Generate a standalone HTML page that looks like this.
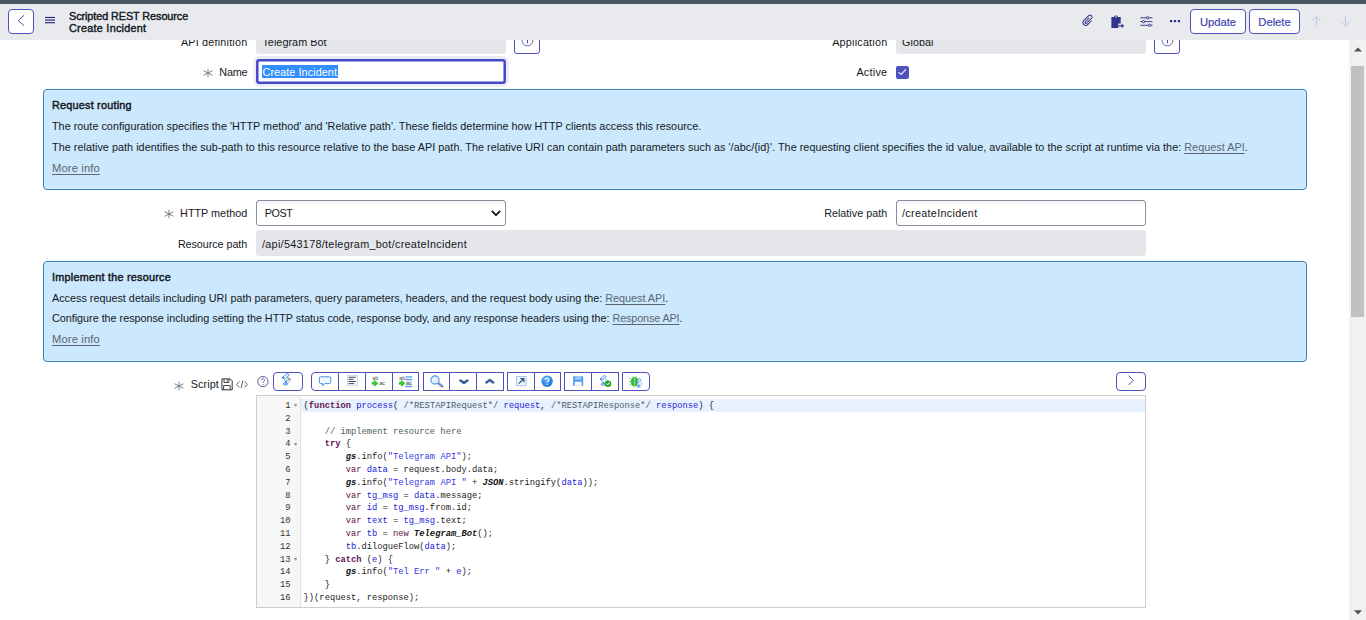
<!DOCTYPE html>
<html lang="en">
<head>
<meta charset="utf-8">
<title>Create Incident | Scripted REST Resource</title>
<style>
*{box-sizing:border-box;margin:0;padding:0}
html,body{width:1366px;height:620px;overflow:hidden;background:#fff}
body{position:relative;font-family:"Liberation Sans",Arial,sans-serif;font-size:10.8px;color:#16181d}
.abs{position:absolute}
svg{position:absolute;overflow:visible}
#strip{left:0;top:0;width:1366px;height:4px;background:#46555f}
#hdr{left:0;top:4px;width:1366px;height:36px;background:#e8eaed}
#back{left:8px;top:9px;width:26px;height:25px;border:1px solid #4f52bd;border-radius:4px;background:#fff}
.title{left:69px;font-size:10.8px;line-height:12px;height:12px;white-space:nowrap;color:#0f1722;-webkit-text-stroke:0.4px #0f1722}
.btn{top:9px;height:25px;border:1px solid #4f52bd;border-radius:4px;background:#fff;color:#4146b6;font-size:11.2px;line-height:25px;text-align:center;white-space:nowrap;-webkit-text-stroke:0.2px #4146b6}
.lbl{height:26px;line-height:26px;text-align:right;white-space:nowrap;font-size:10.8px;color:#16181d}
.ro{background:#e4e6e9;border-radius:3px;height:26px;line-height:26px;padding-left:6px;white-space:nowrap;color:#16181d}
.inp{background:linear-gradient(#eff0f2,#fff 4px);border:1px solid #858e9a;border-radius:3px;height:26px;line-height:24px;padding-left:5px;white-space:nowrap}
.ibtn{width:26px;height:26px;border:1px solid #4f52bd;border-radius:3px;background:#fff}
.info{left:43px;width:1264px;height:101px;background:#cbe8fc;border:1px solid #2f80bc;border-radius:4px;box-shadow:inset 0 0 0 1px rgba(255,255,255,0.3)}
.info div{position:absolute;left:8px;white-space:nowrap;line-height:14px;height:14px;color:#16181d}
.info .h{-webkit-text-stroke:0.45px #16181d}
.info u{color:#5c6670;text-decoration-thickness:1px;text-underline-offset:1.5px}
.info .m{font-size:11.2px;letter-spacing:0.14px}
#sb{left:1349px;top:40px;width:17px;height:580px;background:#f1f1f1}
#sbt{left:1351px;top:66px;width:13px;height:251px;background:#c1c1c1}
.tb{top:372px;height:19px;border:1px solid #4f52bd;background:#fff}
#ed{left:256px;top:395px;width:890px;height:213px;border:1px solid #cdcdcd;background:#fff;overflow:hidden}
#gut{left:0;top:0;width:44px;height:211px;background:#f7f7f7;border-right:1px solid #e2e2e2}
#act{left:44px;top:3px;width:844px;height:13px;background:#e8f1fe}
#code,#nums{position:absolute;top:4px;font-family:"Liberation Mono","DejaVu Sans Mono",monospace;font-size:8.78px;line-height:12.8px;white-space:pre;color:#222}
#code{left:46.6px}
#nums{left:0;width:33.6px;text-align:right;color:#333}
.k{color:#641650;font-weight:bold}
.v{color:#5e1448}
.d{color:#2222d8}
.c{color:#4d5d63}
.s{color:#3a3ae6}
.g{font-weight:bold;font-style:italic;color:#111}
.fold{position:absolute;left:37px;font-size:6px;color:#8a8a96;font-family:"DejaVu Sans",sans-serif;line-height:12.8px}
</style>
</head>
<body>
<div class="abs lbl" style="left:100px;top:29px;width:147.4px;letter-spacing:0.205px">API definition</div>
<div class="abs ro" style="left:256px;top:28px;width:250px;padding-left:6.4px;line-height:28px;letter-spacing:0.05px">Telegram Bot</div>
<div class="abs ibtn" style="left:514px;top:28px"></div>
<svg style="left:521px;top:33.5px" width="13" height="13" viewBox="0 0 13 13"><circle cx="6.5" cy="6.5" r="5.4" fill="none" stroke="#4f52bd" stroke-width="0.9"/><line x1="6.5" y1="5.6" x2="6.5" y2="9.4" stroke="#4f52bd" stroke-width="1"/><circle cx="6.5" cy="3.8" r="0.7" fill="#4f52bd"/></svg>
<div class="abs lbl" style="left:740px;top:29px;width:147.4px;letter-spacing:0.216px">Application</div>
<div class="abs ro" style="left:896px;top:28px;width:250px;letter-spacing:0.05px;line-height:28px">Global</div>
<div class="abs ibtn" style="left:1154px;top:28px"></div>
<svg style="left:1160.8px;top:33.5px" width="13" height="13" viewBox="0 0 13 13"><circle cx="6.5" cy="6.5" r="5.4" fill="none" stroke="#4f52bd" stroke-width="0.9"/><line x1="6.5" y1="5.6" x2="6.5" y2="9.4" stroke="#4f52bd" stroke-width="1"/><circle cx="6.5" cy="3.8" r="0.7" fill="#4f52bd"/></svg>
<div class="abs" id="strip"></div>
<div class="abs" id="hdr"></div>
<div class="abs" id="back"></div>
<svg style="left:8px;top:9px" width="26" height="25" viewBox="0 0 26 25"><polyline points="16,6.3 10.3,11.5 16,16.7" fill="none" stroke="#4f52bd" stroke-width="1"/></svg>
<svg style="left:45px;top:16px" width="10" height="8" viewBox="0 0 10 8"><g stroke="#25277a" stroke-width="1.15"><line x1="0" y1="1.5" x2="10" y2="1.5"/><line x1="0" y1="4.1" x2="10" y2="4.1"/><line x1="0" y1="6.7" x2="10" y2="6.7"/></g></svg>
<div class="abs title" style="top:10px;letter-spacing:-0.06px">Scripted REST Resource</div>
<div class="abs title" style="top:22px;letter-spacing:0.278px">Create Incident</div>
<svg style="left:1082px;top:14px" width="12" height="12" viewBox="-6 -6 12 12"><g transform="translate(0,0.3) rotate(45)"><path d="M2.8 -2.2 V3.2 a2.8 2.8 0 0 1 -5.6 0 V-3.9 a1.9 1.9 0 0 1 3.8 0 V2.9 a0.95 0.95 0 0 1 -1.9 0 V-2.2" fill="none" stroke="#2e2f82" stroke-width="0.95" stroke-linecap="round"/></g></svg>
<svg style="left:1111px;top:15px" width="14" height="14" viewBox="0 0 14 14"><path d="M0.4 2 h2.6 a2.1 2.1 0 0 1 4 0 h2.7 v6.4 h-2.3 v4.6 h-7 z" fill="#33348c"/><circle cx="5" cy="1.9" r="0.75" fill="#e8eaed"/><path d="M7.9 10.2 h2.8 v-1.8 l2.4 2.4 l-2.4 2.4 v-1.8 h-2.8 z" fill="#33348c"/></svg>
<svg style="left:1139.5px;top:15.5px" width="13" height="11" viewBox="0 0 13 11"><g stroke="#2e2f82" stroke-width="0.9" fill="#e8eaed"><line x1="0.3" y1="1.8" x2="12.5" y2="1.8"/><line x1="0.3" y1="5.6" x2="12.5" y2="5.6"/><line x1="0.3" y1="9.3" x2="12.5" y2="9.3"/><circle cx="7.6" cy="1.8" r="1.2"/><circle cx="3.6" cy="5.6" r="1.2"/><circle cx="9.6" cy="9.3" r="1.2"/></g></svg>
<svg style="left:1169.5px;top:19.8px" width="10" height="2" viewBox="0 0 10 2"><rect x="0" y="0" width="2.2" height="2.2" fill="#2e2f82"/><rect x="3.9" y="0" width="2.2" height="2.2" fill="#2e2f82"/><rect x="7.8" y="0" width="2.2" height="2.2" fill="#2e2f82"/></svg>
<div class="abs btn" style="left:1190px;width:56px">Update</div>
<div class="abs btn" style="left:1249px;width:51px">Delete</div>
<svg style="left:1311px;top:15.5px" width="11" height="11" viewBox="0 0 11 11"><path d="M5.5 10.5 V1 M1 5.3 L5.5 0.8 L10 5.3" fill="none" stroke="#c3c5e6" stroke-width="1"/></svg>
<svg style="left:1339.5px;top:15.5px" width="11" height="11" viewBox="0 0 11 11"><path d="M5.5 0.5 V10 M1 5.7 L5.5 10.2 L10 5.7" fill="none" stroke="#c3c5e6" stroke-width="1"/></svg>
<svg style="left:203.3px;top:67.5px" width="10" height="10" viewBox="-5 -5 10 10"><g stroke="#6b7480" stroke-width="0.9" stroke-linecap="butt"><line x1="0" y1="-4.3" x2="0" y2="4.3"/><line x1="-4.5" y1="-2.3" x2="4.5" y2="2.3"/><line x1="-4.5" y1="2.3" x2="4.5" y2="-2.3"/></g></svg>
<div class="abs lbl" style="left:100px;top:59px;width:147.4px;letter-spacing:-0.178px">Name</div>
<svg style="left:250px;top:52px" width="262" height="38" viewBox="250 52 262 38"><rect x="253.3" y="56.1" width="255.4" height="30.6" rx="5.5" fill="#ebebfa"/><rect x="257.3" y="60.15" width="247.4" height="22.6" rx="2" fill="#fff" stroke="#4348ca" stroke-width="2.5"/></svg>
<div class="abs" style="left:262px;top:65px;width:76px;height:13px;background:#338fff"></div>
<div class="abs" style="left:262.5px;top:59px;height:26px;line-height:26px;color:#fff;white-space:nowrap;letter-spacing:0.084px">Create Incident</div>
<div class="abs lbl" style="left:740px;top:59px;width:147.4px;letter-spacing:0.266px">Active</div>
<div class="abs" style="left:896px;top:66px;width:13px;height:13px;background:#4f52bd;border-radius:2px"></div>
<svg style="left:896px;top:66px" width="13" height="13" viewBox="0 0 13 13"><polyline points="2.4,6.4 5.2,8.3 9.8,3.4" fill="none" stroke="#fff" stroke-width="1.05"/></svg>
<div class="abs info" style="top:89px">
 <div class="h" style="top:8px;letter-spacing:0.238px">Request routing</div>
 <div style="top:29px;letter-spacing:0.023px">The route configuration specifies the 'HTTP method' and 'Relative path'. These fields determine how HTTP clients access this resource.</div>
 <div style="top:50px;letter-spacing:0.04px">The relative path identifies the sub-path to this resource relative to the base API path. The relative URI can contain path parameters such as '/abc/{id}'. The requesting client specifies the id value, available to the script at runtime via the: <u>Request API</u>.</div>
 <div class="m" style="top:71px"><u>More info</u></div>
</div>
<svg style="left:163.7px;top:208.9px" width="10" height="10" viewBox="-5 -5 10 10"><g stroke="#6b7480" stroke-width="0.9" stroke-linecap="butt"><line x1="0" y1="-4.3" x2="0" y2="4.3"/><line x1="-4.5" y1="-2.3" x2="4.5" y2="2.3"/><line x1="-4.5" y1="2.3" x2="4.5" y2="-2.3"/></g></svg>
<div class="abs lbl" style="left:100px;top:200px;width:147.2px;letter-spacing:0.008px">HTTP method</div>
<div class="abs inp" style="left:256px;top:200px;width:250px;padding-left:7.8px;letter-spacing:-0.45px">POST</div>
<svg style="left:491px;top:210px" width="10" height="7" viewBox="0 0 10 7"><polyline points="0.8,0.9 5,5.1 9.2,0.9" fill="none" stroke="#1b1c2b" stroke-width="1.9"/></svg>
<div class="abs lbl" style="left:740px;top:200px;width:147.2px;letter-spacing:0px">Relative path</div>
<div class="abs inp" style="left:896px;top:200px;width:250px;letter-spacing:0.311px">/createIncident</div>
<div class="abs lbl" style="left:100px;top:231px;width:147.2px;letter-spacing:-0.072px">Resource path</div>
<div class="abs ro" style="left:256px;top:230px;width:890px;letter-spacing:0.3px;line-height:28px">/api/543178/telegram_bot/createIncident</div>
<div class="abs info" style="top:261px">
 <div class="h" style="top:8px;letter-spacing:0.254px">Implement the resource</div>
 <div style="top:29px;letter-spacing:0.004px">Access request details including URI path parameters, query parameters, headers, and the request body using the: <u>Request API</u>.</div>
 <div style="top:49px;letter-spacing:-0.018px">Configure the response including setting the HTTP status code, response body, and any response headers using the: <u style="letter-spacing:-0.128px">Response API</u>.</div>
 <div class="m" style="top:70px"><u>More info</u></div>
</div>
<svg style="left:174.4px;top:380.6px" width="10" height="10" viewBox="-5 -5 10 10"><g stroke="#6b7480" stroke-width="0.9" stroke-linecap="butt"><line x1="0" y1="-4.3" x2="0" y2="4.3"/><line x1="-4.5" y1="-2.3" x2="4.5" y2="2.3"/><line x1="-4.5" y1="2.3" x2="4.5" y2="-2.3"/></g></svg>
<div class="abs lbl" style="left:150px;top:371px;width:68.8px;letter-spacing:0.065px">Script</div>
<svg style="left:221px;top:377.5px" width="12" height="13" viewBox="0 0 12 13"><path d="M0.9 0.9 h8.3 l2 2 v8.9 h-10.3 z" fill="none" stroke="#2b3536" stroke-width="1"/><path d="M3 0.9 v3.6 h5 v-3.6 M6.3 1.6 v2 M2.6 11.8 v-4.3 h6.6 v4.3" fill="none" stroke="#2b3536" stroke-width="0.9"/></svg>
<svg style="left:235.5px;top:380px" width="12" height="9" viewBox="0 0 12 9"><path d="M3.4 1.4 L0.7 4.4 L3.4 7.4 M8.6 1.4 L11.3 4.4 L8.6 7.4 M6.9 0.6 L5.1 8.2" fill="none" stroke="#4a5558" stroke-width="0.9"/></svg>
<svg style="left:256.5px;top:376px" width="12" height="12" viewBox="0 0 12 12"><circle cx="5.9" cy="5.6" r="5.1" fill="none" stroke="#34367f" stroke-width="0.8"/><path d="M4.3 4.2 a1.6 1.5 0 1 1 2.4 1.3 q-0.8 0.5 -0.8 1.5" fill="none" stroke="#34367f" stroke-width="0.8"/><circle cx="5.9" cy="8.5" r="0.5" fill="#34367f"/></svg>
<div class="abs tb" style="left:273px;width:30px;border-radius:4px 4px 4px 4px"></div>
<div class="abs tb" style="left:311px;width:28px;border-radius:4px 0px 0px 4px"></div>
<div class="abs tb" style="left:338px;width:28px;border-radius:0px 0px 0px 0px"></div>
<div class="abs tb" style="left:365px;width:28px;border-radius:0px 0px 0px 0px"></div>
<div class="abs tb" style="left:392px;width:27px;border-radius:0px 0px 0px 0px"></div>
<div class="abs tb" style="left:423px;width:27px;border-radius:0px 0px 0px 0px"></div>
<div class="abs tb" style="left:449px;width:28px;border-radius:0px 0px 0px 0px"></div>
<div class="abs tb" style="left:476px;width:28px;border-radius:0px 0px 0px 0px"></div>
<div class="abs tb" style="left:507px;width:28px;border-radius:0px 0px 0px 0px"></div>
<div class="abs tb" style="left:534px;width:27px;border-radius:0px 0px 0px 0px"></div>
<div class="abs tb" style="left:564px;width:28px;border-radius:0px 0px 0px 0px"></div>
<div class="abs tb" style="left:591px;width:28px;border-radius:0px 0px 0px 0px"></div>
<div class="abs tb" style="left:622px;width:28px;border-radius:0px 4px 4px 0px"></div>
<div class="abs tb" style="left:1116px;width:30px;border-radius:4px"></div>
<svg style="left:1116px;top:372px" width="30" height="19" viewBox="0 0 30 19"><polyline points="12.6,3.6 17.2,8.3 12.6,13" fill="none" stroke="#4f52bd" stroke-width="1"/></svg>

<svg style="left:281.8px;top:372.6px" width="10" height="13" viewBox="0 0 10 13"><path d="M4.8 0.4 L7.4 1.8 L2.6 6.3 L0.3 4.6 Z" fill="#dbe8ff" stroke="#3f86f5" stroke-width="0.8"/><path d="M5.2 3.6 L9 6.3 L5.6 10.2 L2.2 7.2 Z" fill="#eef4ff" stroke="#6ea5f8" stroke-width="0.7"/><ellipse cx="3.4" cy="10.9" rx="2.3" ry="1.2" fill="#9cc2fb" stroke="#3f86f5" stroke-width="0.7"/><circle cx="0.9" cy="4.6" r="0.9" fill="#1546c8"/><circle cx="3.8" cy="8.9" r="0.8" fill="#1546c8"/><path d="M4.6 4.9 l2 -0.3 M3.9 7.6 l1.8 -0.5" stroke="#35c435" stroke-width="0.9"/><ellipse cx="6.9" cy="6.2" rx="1.1" ry="0.6" fill="#e23a1c"/></svg>
<svg style="left:318.5px;top:375.5px" width="13" height="11" viewBox="0 0 13 11"><path d="M1.6 0.8 h9 a1.2 1.2 0 0 1 1.2 1.2 v4.4 a1.2 1.2 0 0 1 -1.2 1.2 h-4.8 l-2.3 2.4 v-2.4 h-1.9 a1.2 1.2 0 0 1 -1.2 -1.2 v-4.4 a1.2 1.2 0 0 1 1.2 -1.2 z" fill="#f1f7ff" stroke="#4a93ea" stroke-width="1"/></svg>
<svg style="left:347px;top:375px" width="11" height="11" viewBox="0 0 11 11"><rect x="0.4" y="0.4" width="10.2" height="10.2" fill="#f1f6ff" stroke="#bcd4f6" stroke-width="0.8"/><g stroke="#4c4c4c" stroke-width="1"><line x1="1.6" y1="2.3" x2="8.8" y2="2.3"/><line x1="1.6" y1="4.4" x2="6.4" y2="4.4"/><line x1="1.6" y1="6.5" x2="8.8" y2="6.5"/><line x1="1.6" y1="8.6" x2="7" y2="8.6"/></g></svg>
<svg style="left:371.6px;top:374.8px" width="14" height="12" viewBox="0 0 14 12"><text x="0.2" y="4.6" font-family="Liberation Sans,sans-serif" font-size="5.6" fill="#555">ab</text><text x="7.2" y="10.2" font-family="Liberation Sans,sans-serif" font-size="5.6" fill="#444">ac</text><path d="M0.3 7.3 h2.2 v-1.9 l3.4 2.9 l-3.4 2.9 v-1.9 h-2.2 z" fill="#35d435" stroke="#12a012" stroke-width="0.6"/></svg>
<svg style="left:398.7px;top:374.8px" width="14" height="13" viewBox="0 0 14 13"><text x="0.2" y="4.6" font-family="Liberation Sans,sans-serif" font-size="5.6" fill="#555">ab</text><rect x="6.4" y="1" width="6.8" height="10.8" fill="#e3eefc"/><g stroke="#5b96e6" stroke-width="1.1"><line x1="6.4" y1="1.9" x2="13.2" y2="1.9"/><line x1="6.4" y1="4.6" x2="13.2" y2="4.6"/></g><line x1="6.4" y1="11.7" x2="13.2" y2="11.7" stroke="#3f86f5" stroke-width="1"/><text x="7" y="10.2" font-family="Liberation Sans,sans-serif" font-size="5.6" fill="#444">ac</text><path d="M0.3 7.3 h2.2 v-1.9 l3.4 2.9 l-3.4 2.9 v-1.9 h-2.2 z" fill="#35d435" stroke="#12a012" stroke-width="0.6"/></svg>
<svg style="left:430px;top:374.5px" width="14" height="13" viewBox="0 0 14 13"><line x1="8.2" y1="8.2" x2="12.2" y2="11.4" stroke="#4f6fa8" stroke-width="2.3" stroke-linecap="round"/><line x1="8.6" y1="8.5" x2="12" y2="11.2" stroke="#9fc4f4" stroke-width="0.9" stroke-linecap="round"/><circle cx="5" cy="5" r="4.1" fill="#e3f0ff" stroke="#4a93ea" stroke-width="1.1"/></svg>
<svg style="left:458.5px;top:378.5px" width="10" height="6" viewBox="0 0 10 6"><polyline points="1.4,1.5 4.9,3.9 8.4,1.5" fill="none" stroke="#3a5d9f" stroke-width="2.5" stroke-linecap="round" stroke-linejoin="round"/></svg>
<svg style="left:485px;top:377.8px" width="10" height="6" viewBox="0 0 10 6"><polyline points="1.4,4.4 4.8,2 8.2,4.4" fill="none" stroke="#3a5d9f" stroke-width="2.5" stroke-linecap="round" stroke-linejoin="round"/></svg>
<svg style="left:515.5px;top:375.8px" width="11" height="11" viewBox="0 0 11 11"><rect x="0.5" y="0.5" width="9.6" height="9.2" fill="#eef4ff" stroke="#a9c4f2" stroke-width="1"/><path d="M2.8 7.6 L7.4 3 M4.3 2.7 h3.5 v3.5" fill="none" stroke="#3b4f78" stroke-width="1.3"/></svg>
<svg style="left:541px;top:374.5px" width="12" height="12" viewBox="0 0 12 12"><defs><radialGradient id="hg" cx="0.4" cy="0.3" r="0.8"><stop offset="0" stop-color="#5fb2ff"/><stop offset="1" stop-color="#0f68e0"/></radialGradient></defs><circle cx="6.1" cy="6.2" r="5.7" fill="url(#hg)"/><path d="M4.3 4.7 a1.8 1.6 0 1 1 2.7 1.4 q-0.9 0.5 -0.9 1.4" fill="none" stroke="#fff" stroke-width="1.2"/><circle cx="6.1" cy="9.3" r="0.75" fill="#fff"/></svg>
<svg style="left:573px;top:376px" width="11" height="10" viewBox="0 0 11 10"><rect x="0.2" y="0.2" width="10" height="9.7" rx="0.8" fill="#4a97f5"/><rect x="2" y="0.2" width="6.4" height="3.6" fill="#9cc8ff"/><rect x="1.7" y="5.7" width="7" height="4.2" fill="#f4f9ff"/></svg>
<svg style="left:599.5px;top:375px" width="12" height="13" viewBox="0 0 12 13"><g transform="scale(0.86)"><path d="M4.8 0.4 L7.4 1.8 L2.6 6.3 L0.3 4.6 Z" fill="#dbe8ff" stroke="#3f86f5" stroke-width="0.8"/><path d="M5.2 3.6 L9 6.3 L5.6 10.2 L2.2 7.2 Z" fill="#eef4ff" stroke="#6ea5f8" stroke-width="0.7"/><ellipse cx="3.4" cy="10.9" rx="2.3" ry="1.2" fill="#9cc2fb" stroke="#3f86f5" stroke-width="0.7"/><circle cx="0.9" cy="4.6" r="0.9" fill="#1546c8"/><circle cx="3.8" cy="8.9" r="0.8" fill="#1546c8"/></g><circle cx="8" cy="8.7" r="3.3" fill="#22a822"/><polyline points="6.4,8.5 7.7,10 9.7,7.2" fill="none" stroke="#fff" stroke-width="1"/></svg>
<svg style="left:629px;top:375.5px" width="14" height="12" viewBox="0 0 14 12"><g stroke="#2eb82e" stroke-width="0.8"><line x1="0.4" y1="2" x2="3" y2="4"/><line x1="0.2" y1="5.6" x2="3" y2="5.6"/><line x1="0.6" y1="9.4" x2="3" y2="7.4"/><line x1="10.2" y1="2" x2="8" y2="4"/><line x1="3.6" y1="0.4" x2="4.6" y2="1.8"/><line x1="7.6" y1="0.4" x2="6.6" y2="1.8"/></g><ellipse cx="5.6" cy="5.8" rx="3.1" ry="4.4" fill="#2fc02f" stroke="#1a8f1a" stroke-width="0.5"/><line x1="5.6" y1="2" x2="5.6" y2="10" stroke="#bff0bf" stroke-width="0.7"/><g transform="translate(7.2,2.6) scale(0.72)"><path d="M4.8 0.4 L7.4 1.8 L2.6 6.3 L0.3 4.6 Z" fill="#dbe8ff" stroke="#3f86f5" stroke-width="0.8"/><path d="M5.2 3.6 L9 6.3 L5.6 10.2 L2.2 7.2 Z" fill="#eef4ff" stroke="#6ea5f8" stroke-width="0.7"/><ellipse cx="3.4" cy="10.9" rx="2.3" ry="1.2" fill="#9cc2fb" stroke="#3f86f5" stroke-width="0.7"/><circle cx="0.9" cy="4.6" r="0.9" fill="#1546c8"/><circle cx="3.8" cy="8.9" r="0.8" fill="#1546c8"/></g></svg>

<div class="abs" id="ed">
<div class="abs" id="gut"></div>
<div class="abs" id="act"></div>
<div id="nums">1
2
3
4
5
6
7
8
9
10
11
12
13
14
15
16</div>
<div class="fold" style="top:3.4px">▾</div>
<div class="fold" style="top:41.8px">▾</div>
<div class="fold" style="top:157.0px">▾</div>
<div id="code">(<span class="k">function</span> <span class="d">process</span>( <span class="c">/*RESTAPIRequest*/</span> <span class="d">request</span>, <span class="c">/*RESTAPIResponse*/</span> <span class="d">response</span>) {

    <span class="c">// implement resource here</span>
    <span class="k">try</span> {
        <span class="g">gs</span>.info(<span class="s">"Telegram API"</span>);
        <span class="v">var</span> <span class="d">data</span> = request.body.data;
        <span class="g">gs</span>.info(<span class="s">"Telegram API "</span> + <span class="g">JSON</span>.stringify(<span class="d">data</span>));
        <span class="v">var</span> <span class="d">tg_msg</span> = <span class="d">data</span>.message;
        <span class="v">var</span> <span class="d">id</span> = <span class="d">tg_msg</span>.from.id;
        <span class="v">var</span> <span class="d">text</span> = <span class="d">tg_msg</span>.text;
        <span class="v">var</span> <span class="d">tb</span> = <span class="v">new</span> <span class="g">Telegram_Bot</span>();
        <span class="d">tb</span>.dilogueFlow(<span class="d">data</span>);
    } <span class="k">catch</span> (<span class="d">e</span>) {
        <span class="g">gs</span>.info(<span class="s">"Tel Err "</span> + <span class="d">e</span>);
    }
})(request, response);</div>
</div>
<div class="abs" id="sb"></div>
<div class="abs" id="sbt"></div>
<svg style="left:1353.5px;top:46.5px" width="8" height="5" viewBox="0 0 8 5"><polygon points="0,4.6 4,0.4 8,4.6" fill="#505050"/></svg>
<svg style="left:1353.5px;top:609.8px" width="8" height="5" viewBox="0 0 8 5"><polygon points="0,0.2 4,4.4 8,0.2" fill="#505050"/></svg>
</body>
</html>
